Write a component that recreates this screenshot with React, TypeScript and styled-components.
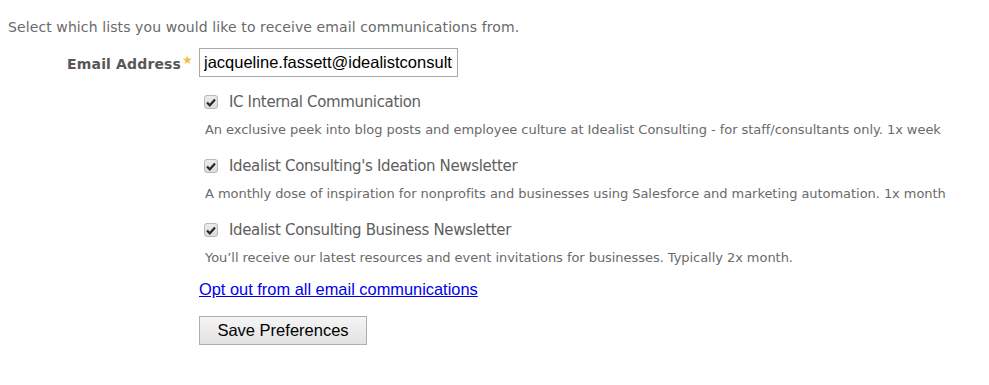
import React from "react";
import styled, { createGlobalStyle } from "styled-components";

const Global = createGlobalStyle`
  html, body { margin: 0; padding: 0; background: #fff; }
  body { font-family: "DejaVu Sans", Verdana, sans-serif; color: #666; }
`;

const Page = styled.div`
  padding: 16px 8px 0 8px;
`;

const Intro = styled.p`
  margin: 0;
  font-size: 14px;
  line-height: 22px;
  letter-spacing: 0.1px;
  color: #6a6a6a;
`;

const Form = styled.div`
  display: grid;
  grid-template-columns: 185px 1fr;
  column-gap: 6px;
  margin-top: 10px;
`;

const Label = styled.label`
  justify-self: end;
  align-self: center;
  font-size: 14px;
  font-weight: bold;
  color: #575757;
  letter-spacing: 0.15px;
`;

const Star = styled.span`
  color: #f0c040;
  font-size: 12px;
  vertical-align: 5px;
  margin-left: 1px;
`;

const Input = styled.input`
  width: 259px;
  height: 29px;
  box-sizing: border-box;
  border: 1px solid #a9a9a9;
  padding: 0 4px;
  font-family: "Liberation Sans", Arial, sans-serif;
  font-size: 16.5px;
  color: #000;
  outline: none;
`;

const Lists = styled.div`
  grid-column: 2;
  display: flex;
  flex-direction: column;
  margin-top: 15px;
`;

const Item = styled.div`
  display: flex;
  flex-direction: column;
  margin-bottom: 18px;
`;

const CheckRow = styled.div`
  display: flex;
  align-items: center;
  gap: 11px;
  padding-left: 5px;
  height: 20px;
`;

const Box = styled.span`
  width: 14px;
  height: 14px;
  box-sizing: border-box;
  border: 1px solid #b8b8b8;
  border-radius: 3px;
  background: linear-gradient(#ececec, #dcdcdc);
  display: flex;
  align-items: center;
  justify-content: center;
`;

const ItemTitle = styled.span`
  font-size: 15px;
  letter-spacing: -0.35px;
  color: #5e5e5e;
`;

const Desc = styled.div`
  padding-left: 6px;
  margin-top: 10px;
  font-size: 13px;
  line-height: 16px;
  letter-spacing: -0.05px;
  color: #6a6a6a;
`;

const OptOut = styled.a`
  font-family: "Liberation Sans", Arial, sans-serif;
  font-size: 16.4px;
  color: #0000ee;
  text-decoration: underline;
  margin-top: -4px;
  line-height: 18px;
`;

const Button = styled.button`
  align-self: flex-start;
  margin-top: 18px;
  width: 168px;
  height: 29px;
  box-sizing: border-box;
  border: 1px solid #adadad;
  background: linear-gradient(#f5f5f5, #e2e2e2);
  font-family: "Liberation Sans", Arial, sans-serif;
  font-size: 16.5px;
  color: #000;
  padding: 0;
`;

const Check = () => (
  <svg width="10" height="9" viewBox="0 0 10 9">
    <path d="M1 4.5 L3.8 7.3 L9 1.5" fill="none" stroke="#2a2a2a" strokeWidth="2.2" />
  </svg>
);

const lists = [
  {
    title: "IC Internal Communication",
    desc: "An exclusive peek into blog posts and employee culture at Idealist Consulting - for staff/consultants only. 1x week",
  },
  {
    title: "Idealist Consulting's Ideation Newsletter",
    desc: "A monthly dose of inspiration for nonprofits and businesses using Salesforce and marketing automation. 1x month",
  },
  {
    title: "Idealist Consulting Business Newsletter",
    desc: "You\u2019ll receive our latest resources and event invitations for businesses. Typically 2x month.",
  },
];

export default function App() {
  return (
    <Page>
      <Global />
      <Intro>Select which lists you would like to receive email communications from.</Intro>
      <Form>
        <Label>
          Email Address<Star>★</Star>
        </Label>
        <Input defaultValue="jacqueline.fassett@idealistconsulting.com" />
        <Lists>
          {lists.map((l) => (
            <Item key={l.title}>
              <CheckRow>
                <Box>
                  <Check />
                </Box>
                <ItemTitle>{l.title}</ItemTitle>
              </CheckRow>
              <Desc>{l.desc}</Desc>
            </Item>
          ))}
          <OptOut href="#">Opt out from all email communications</OptOut>
          <Button>Save Preferences</Button>
        </Lists>
      </Form>
    </Page>
  );
}
